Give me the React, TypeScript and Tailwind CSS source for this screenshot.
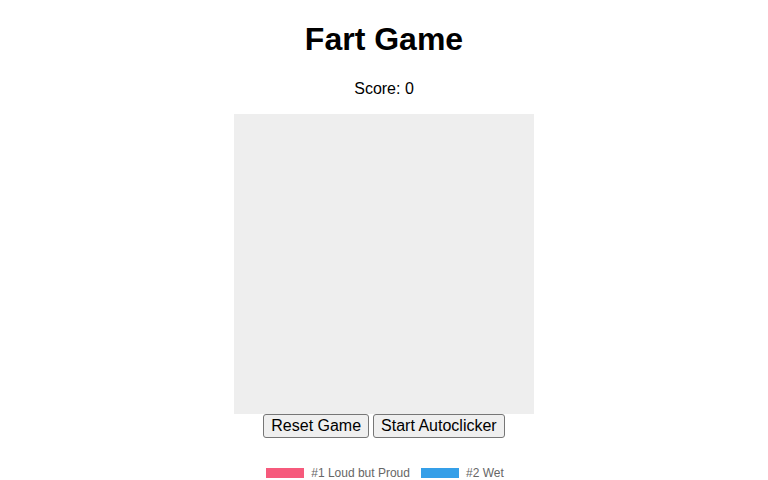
const legend = [
  { label: "#1 Loud but Proud", color: "bg-[#f65a7c]" },
  { label: "#2 Wet", color: "bg-[#359fe8]" },
];

export default function App() {
  return (
    <div className="flex h-[480px] flex-col items-center overflow-hidden bg-white font-['Liberation_Sans',Arial,sans-serif] text-black">
      <h1 className="mt-[21px] text-[32px] leading-[37px] font-bold">Fart Game</h1>
      <p className="mt-[22px] text-base leading-[18px]">Score: 0</p>
      <div className="mt-4 h-[300px] w-[300px] shrink-0 bg-[#eeeeee]" />
      <div className="flex gap-1">
        <button className="h-6 rounded-[3px] border border-[#767676] bg-[#efefef] px-[7px] text-base leading-[18px]">
          Reset Game
        </button>
        <button className="h-6 rounded-[3px] border border-[#767676] bg-[#efefef] px-[7px] text-base leading-[18px]">
          Start Autoclicker
        </button>
      </div>
      <div className="mt-[28px] flex items-center gap-[11px] pl-[2px]">
        {legend.map((item) => (
          <div key={item.label} className="flex items-center gap-[7px]">
            <span className={`h-[10px] w-[38px] ${item.color}`} />
            <span className="text-xs leading-[14px] text-[#666666]">{item.label}</span>
          </div>
        ))}
      </div>
    </div>
  );
}
